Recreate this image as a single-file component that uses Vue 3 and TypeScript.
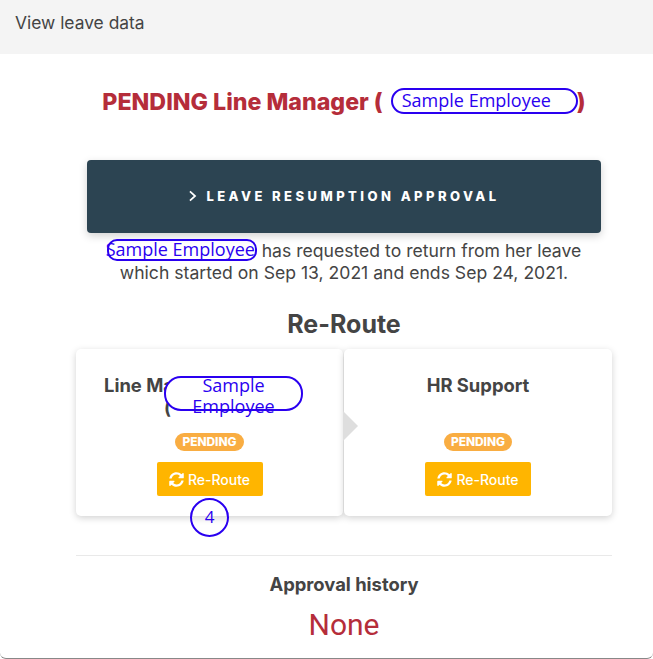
<script setup lang="ts">
interface Approver {
  role: string
  status: string
}
const approvers: Approver[] = [
  { role: 'Line Manager', status: 'PENDING' },
  { role: 'HR Support', status: 'PENDING' },
]
</script>

<template>
  <div class="window">
    <header class="topbar">View leave data</header>
    <main class="content">
      <h1 class="title">
        <span>PENDING Line Manager (</span><span class="mark mark-title">Sample Employee</span><span>)</span>
      </h1>
      <div class="banner">
        <svg class="chevron" viewBox="0 0 10 14" width="9" height="12">
          <path d="M2 1.5 L8 7 L2 12.5" fill="none" stroke="#fff" stroke-width="2" />
        </svg>
        <span>LEAVE RESUMPTION APPROVAL</span>
      </div>
      <p class="message">
        <span class="mark mark-message">Sample Employee</span> has requested to return from her leave<br />
        which started on Sep 13, 2021 and ends Sep 24, 2021.
      </p>
      <h2 class="section">Re-Route</h2>
      <div class="cards">
        <article v-for="(a, i) in approvers" :key="a.role" class="card">
          <h3 class="role" :class="{ 'role-first': i === 0 }">
            {{ a.role }}<span v-if="i === 0" class="role-rest">(</span>
          </h3>
          <span class="badge">{{ a.status }}</span>
          <button class="route" type="button">
            <svg viewBox="0 0 512 512" width="15" height="15">
              <path fill="#fff" d="M370.72 133.28C339.458 104.008 298.888 87.962 255.848 88c-77.458.068-144.328 53.178-162.791 126.85-1.344 5.363-6.122 9.15-11.651 9.15H24.103c-7.498 0-13.194-6.807-11.807-14.176C33.933 94.924 134.813 8 256 8c66.448 0 126.791 26.136 171.315 68.685L463.03 40.97C478.149 25.851 504 36.559 504 57.941V192c0 13.255-10.745 24-24 24H345.941c-21.382 0-32.09-25.851-16.971-40.971l41.75-41.749zM32 296h134.059c21.382 0 32.09 25.851 16.971 40.971l-41.75 41.75c31.262 29.273 71.835 45.319 114.876 45.28 77.418-.07 144.315-53.144 162.787-126.849 1.344-5.363 6.122-9.15 11.651-9.15h57.304c7.498 0 13.194 6.807 11.807 14.176C478.067 417.076 377.187 504 256 504c-66.448 0-126.791-26.136-171.315-68.685L48.97 471.03C33.851 486.149 8 475.441 8 454.059V320c0-13.255 10.745-24 24-24z" />
            </svg>
            Re-Route
          </button>
          <span v-if="i === 0" class="arrow"></span>
          <template v-if="i === 0">
            <span class="mark mark-card">Sample Employee</span>
            <span class="mark mark-number">4</span>
          </template>
        </article>
      </div>
      <hr class="rule" />
      <h4 class="history">Approval history</h4>
      <p class="none">None</p>
    </main>
  </div>
</template>

<style>
html, body { margin: 0; background: #fff; }
</style>

<style scoped>
.window {
  position: relative;
  width: 653px;
  height: 659px;
  box-sizing: border-box;
  overflow: hidden;
  background: #fff;
  color: #444;
  font-family: Inter, Roboto, "Liberation Sans", sans-serif;
  border-bottom: 1px solid #888;
  border-radius: 0 0 6px 6px;
}
.topbar {
  height: 54px;
  box-sizing: border-box;
  padding: 13px 15px;
  background: #f4f4f4;
  font-size: 17.4px;
  line-height: 20px;
}
.content {
  padding: 0 41px 0 76px;
  display: flex;
  flex-direction: column;
  align-items: stretch;
  text-align: center;
}
.title {
  margin: 34px 0 0;
  height: 29px;
  font-size: 23.2px;
  line-height: 29px;
  font-weight: 800;
  color: #b52d3a;
  white-space: nowrap;
  display: flex;
  justify-content: center;
  align-items: center;
}
.mark {
  box-sizing: border-box;
  background: #fff;
  border: 2px solid #2a00f0;
  color: #2a00f0;
  font-family: "Open Sans", sans-serif;
  font-weight: 400;
  text-align: center;
}
.mark-title {
  width: 187px;
  height: 26px;
  margin: 0 -1px 4px 8px;
  border-radius: 13px;
  font-size: 18px;
  line-height: 21px;
  text-align: left;
  padding-left: 9px;
}
.banner {
  margin: 43px 11px 0;
  height: 73px;
  box-sizing: border-box;
  padding-bottom: 2px;
  background: #2c4452;
  border-radius: 4px;
  box-shadow: 0 3px 8px rgba(0, 0, 0, 0.18);
  color: #fff;
  display: flex;
  align-items: center;
  justify-content: center;
  gap: 9px;
  font-size: 13px;
  font-weight: 800;
  letter-spacing: 3.45px;
}
.chevron { flex: none; }
.message {
  margin: 6px -10px 0;
  font-size: 17.6px;
  line-height: 21.5px;
  color: #444;
  white-space: nowrap;
}
.mark-message {
  display: inline-block;
  width: 150px;
  height: 22px;
  border-radius: 10px;
  background: transparent;
  font-size: 18px;
  line-height: 16px;
  white-space: nowrap;
  vertical-align: 1px;
  text-align: center;
  text-indent: -3px;
}
.section {
  margin: 27px 0 0;
  font-size: 25px;
  line-height: 28px;
  font-weight: 700;
  color: #444;
}
.cards {
  margin-top: 11px;
  display: grid;
  grid-template-columns: 267px 268px;
  gap: 1px;
}
.card {
  position: relative;
  height: 167px;
  border-radius: 5px;
  background: #fff;
  box-shadow: 0 2px 7px rgba(0, 0, 0, 0.18);
  display: flex;
  flex-direction: column;
  align-items: center;
}
.role {
  margin: 25px 0 0;
  height: 52px;
  font-size: 18.4px;
  line-height: 22px;
  font-weight: 700;
  color: #444;
}
.role-first {
  align-self: flex-start;
  margin-left: 28px;
  text-align: left;
}
.role-rest {
  display: block;
  margin-left: 60px;
}
.badge {
  margin-top: 7px;
  height: 18px;
  padding: 0 7px;
  border-radius: 9px;
  background: #f9ad42;
  color: #fff;
  font-size: 11.9px;
  line-height: 18px;
  font-weight: 800;
}
.route {
  margin-top: 11px;
  width: 106px;
  height: 34px;
  border: 0;
  border-radius: 2px;
  background: #ffb500;
  color: #fff;
  font-family: Inter, sans-serif;
  font-size: 14px;
  font-weight: 500;
  display: flex;
  align-items: center;
  justify-content: center;
  gap: 4px;
  padding: 0;
}
.arrow {
  position: absolute;
  z-index: 2;
  left: 267px;
  top: 62px;
  width: 0;
  height: 0;
  border-top: 15px solid transparent;
  border-bottom: 15px solid transparent;
  border-left: 15px solid #dedede;
}
.mark-card {
  position: absolute;
  z-index: 3;
  left: 88px;
  top: 27px;
  width: 139px;
  height: 35px;
  border-radius: 17px;
  background: #fff;
  font-size: 18px;
  line-height: 21px;
  padding: 4px 20px 0;
  display: flex;
  align-items: center;
  justify-content: center;
}
.mark-number {
  position: absolute;
  z-index: 3;
  left: 114px;
  top: 149px;
  width: 39px;
  height: 39px;
  border-radius: 50%;
  background: transparent;
  font-size: 17px;
  font-weight: 500;
  line-height: 34px;
}
.rule {
  margin: 39px 0 0;
  border: 0;
  border-top: 1px solid #e9e9e9;
  height: 0;
}
.history {
  margin: 18px 0 0;
  font-size: 18.4px;
  line-height: 20px;
  font-weight: 700;
}
.none {
  margin: 13px 0 0;
  font-size: 30px;
  line-height: 36px;
  font-family: Roboto, sans-serif;
  color: #b52d3a;
}
</style>
